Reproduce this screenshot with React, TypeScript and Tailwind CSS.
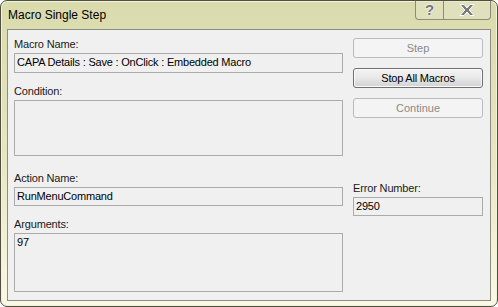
import React from "react";

const font = { fontFamily: '"Liberation Sans", Arial, sans-serif' };

const Label = ({ children }: { children: React.ReactNode }) => (
  <div className="h-[14px] mb-[2px] text-[11px] leading-[14px] tracking-[-0.15px] text-[#1a1a1a] whitespace-nowrap">
    {children}
  </div>
);

const Field = ({ value, height }: { value?: string; height: string }) => (
  <div
    className={`${height} border border-[#ababab] bg-[#f0f0f0] pl-[2px] pt-[1px] text-[11px] leading-[14px] tracking-[-0.2px] text-black whitespace-nowrap overflow-hidden`}
  >
    {value}
  </div>
);

const DialogButton = ({
  label,
  disabled,
}: {
  label: string;
  disabled?: boolean;
}) =>
  disabled ? (
    <div className="h-[20px] rounded-[3px] border border-[#b9bcbf] bg-[#f4f4f4] text-center text-[11px] leading-[18px] text-[#8a8a8a]">
      {label}
    </div>
  ) : (
    <div className="h-[20px] rounded-[3px] border border-[#707070] bg-gradient-to-b from-[#f3f3f3] via-[#e8e8e8] to-[#d2d2d2] text-center text-[11px] leading-[18px] tracking-[-0.2px] text-black shadow-[inset_0_0_0_1px_#fbfbfb]">
      {label}
    </div>
  );

export default function App() {
  return (
    <div
      className="relative h-[307px] w-[498px] overflow-hidden rounded-[7px] border border-[#4f5040] bg-gradient-to-b from-[#d9dbad] via-[#e6e6c0] to-[#fbf9e6] shadow-[inset_0_0_0_1px_#f3f3dc]"
      style={font}
    >
      {/* title bar */}
      <div className="flex h-[28px] items-start justify-between pl-[7px]">
        <div className="pt-[6px] text-[12px] leading-[16px] text-black">
          Macro Single Step
        </div>
        <div className="mr-[6px] flex h-[20px] -mt-px">
          <div className="flex h-[20px] w-[29px] items-center justify-center rounded-bl-[4px] border border-t-0 border-[#8c8d78] bg-[#e4e5c4]/60 text-[15px] font-bold leading-none text-[#747474] [text-shadow:0_0_1px_#fff,0_0_1px_#fff,0_0_2px_#fff]">
            ?
          </div>
          <div className="flex h-[20px] w-[47px] items-center justify-center rounded-br-[4px] border border-l-0 border-t-0 border-[#8c8d78] bg-[#e4e5c4]/60">
            <svg width="20" height="14" viewBox="0 0 20 14">
              <path
                d="M3 1.5h4L10 5l3-3.5h4L12.2 7l4.8 5.5h-4L10 9l-3 3.5H3L7.8 7z"
                fill="#7a7a7a"
                stroke="#ffffff"
                strokeWidth="1"
                strokeLinejoin="round"
              />
            </svg>
          </div>
        </div>
      </div>

      {/* client area */}
      <div className="mx-[6px] h-[272px] border border-[#8d8e80] bg-[#f0f0f0]">
        <div className="grid grid-cols-[329px_130px] gap-x-[10px] pl-[6px] pt-[7px]">
          <div className="flex flex-col">
            <Label>Macro Name:</Label>
            <Field
              height="h-[20px]"
              value="CAPA Details : Save : OnClick : Embedded Macro"
            />
            <div className="mt-[11px]">
              <Label>Condition:</Label>
            </div>
            <Field height="h-[56px]" />
            <div className="mt-[15px]">
              <Label>Action Name:</Label>
            </div>
            <Field height="h-[19px]" value="RunMenuCommand" />
            <div className="mt-[11px]">
              <Label>Arguments:</Label>
            </div>
            <Field height="h-[59px]" value="97" />
          </div>

          <div className="flex flex-col pt-px">
            <div className="flex flex-col gap-[10px]">
              <DialogButton label="Step" disabled />
              <DialogButton label="Stop All Macros" />
              <DialogButton label="Continue" disabled />
            </div>
            <div className="mt-[63px]">
              <Label>Error Number:</Label>
            </div>
            <Field height="h-[19px]" value="2950" />
          </div>
        </div>
      </div>
    </div>
  );
}
